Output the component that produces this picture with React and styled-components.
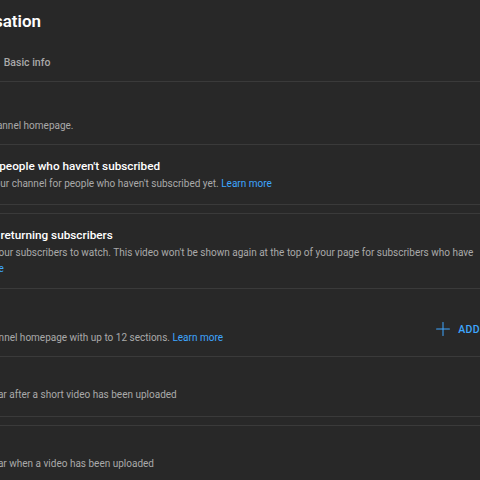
import React from 'react'
import styled, { createGlobalStyle } from 'styled-components'
import { Plus } from 'lucide-react'

const GlobalStyle = createGlobalStyle`
  html, body {
    margin: 0;
    background: #282828;
    overflow: hidden;
  }
  body {
    font-family: Roboto, "Noto Sans", Arial, sans-serif;
  }
`

// the page is shown scrolled sideways: its left edge sits outside the window
const Page = styled.div`
    width: 634px;
    margin-left: -98px;
    color: #fff;
`

const Header = styled.header`
    padding: 11px 0 12px;
`

const Title = styled.h1`
    margin: 0 0 0 -36px;
    font-size: 17px;
    line-height: 20px;
    font-weight: 600;
    color: #fff;
`

const Tabs = styled.nav`
    display: flex;
    gap: 14px;
    height: 38px;
    border-bottom: 1px solid #3a3a3a;
`

const Tab = styled.div`
    display: flex;
    align-items: center;
    font-size: 10.5px;
    font-weight: 500;
    color: ${p => (p.$active ? '#fff' : '#aaa')};
    box-shadow: ${p => (p.$active ? 'inset 0 -2px 0 #fff' : 'none')};
`

const Section = styled.section`
    display: flex;
    align-items: center;
    gap: 16px;
    padding: ${p => p.$pt}px 0 ${p => p.$pb}px;
    border-bottom: 1px solid #3a3a3a;
`

const SectionText = styled.div`
    flex: 1;
    min-width: 0;
`

const Heading = styled.h2`
    margin: 0 0 2px;
    font-size: 11.75px;
    line-height: 16px;
    font-weight: 500;
    color: #fff;
`

const Desc = styled.p`
    margin: 0;
    max-width: 590px;
    font-size: 10px;
    line-height: 16px;
    color: #aaa;
`

const Link = styled.a`
    color: #3ea6ff;
    text-decoration: none;
    cursor: pointer;
`

const Spacer = styled.div`
    height: 8px;
    border-bottom: 1px solid #3a3a3a;
`

const AddButton = styled.button`
    display: flex;
    align-items: center;
    gap: 4px;
    padding: 0 8px;
    background: none;
    border: none;
    color: #3ea6ff;
    font-family: Roboto, "Noto Sans", Arial, sans-serif;
    font-size: 10.5px;
    font-weight: 500;
    letter-spacing: 0.3px;
    white-space: nowrap;
    cursor: pointer;
`

function App() {
  return (
    <>
      <GlobalStyle />
      <Page>
        <Header>
          <Title>Channel customisation</Title>
        </Header>

        <Tabs>
          <Tab $active>Layout</Tab>
          <Tab>Branding</Tab>
          <Tab>Basic info</Tab>
        </Tabs>

        <Section $pt={18} $pb={10}>
          <SectionText>
            <Heading>Video spotlight</Heading>
            <Desc>Pin a video to your channel homepage.</Desc>
          </SectionText>
        </Section>

        <Section $pt={13} $pb={12}>
          <SectionText>
            <Heading>Channel trailer for people who haven't subscribed</Heading>
            <Desc>
              Create a preview of your channel for people who haven't subscribed yet.{' '}
              <Link>Learn more</Link>
            </Desc>
          </SectionText>
        </Section>

        <Spacer />

        <Section $pt={13} $pb={11}>
          <SectionText>
            <Heading>Featured video for returning subscribers</Heading>
            <Desc>
              Highlight a video for your subscribers to watch. This video won't be shown again at the top of your page for subscribers who have watched it.{' '}
              <Link>Learn more</Link>
            </Desc>
          </SectionText>
        </Section>

        <Section $pt={23} $pb={10}>
          <SectionText>
            <Heading>Featured sections</Heading>
            <Desc>
              Arrange your own channel homepage with up to 12 sections. <Link>Learn more</Link>
            </Desc>
          </SectionText>
          <AddButton>
            <Plus size={22} strokeWidth={1.1} />
            ADD SECTION
          </AddButton>
        </Section>

        <Section $pt={12} $pb={13}>
          <SectionText>
            <Heading>Shorts</Heading>
            <Desc>This section will appear after a short video has been uploaded</Desc>
          </SectionText>
        </Section>

        <Spacer />

        <Section $pt={12} $pb={13}>
          <SectionText>
            <Heading>Videos</Heading>
            <Desc>This section will appear when a video has been uploaded</Desc>
          </SectionText>
        </Section>
      </Page>
    </>
  )
}

export default App
